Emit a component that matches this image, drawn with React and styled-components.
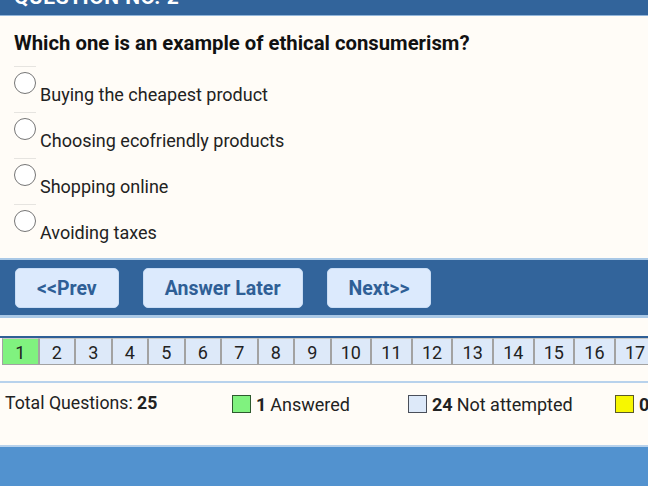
import React from "react";
import styled, { createGlobalStyle } from "styled-components";

const GlobalStyle = createGlobalStyle`
  html, body {
    margin: 0;
    padding: 0;
    background: #fffcf7;
    font-family: Roboto, "Liberation Sans", Arial, sans-serif;
    overflow: hidden;
  }
`;

const Page = styled.div`
  width: 648px;
  height: 486px;
  display: flex;
  flex-direction: column;
  overflow: hidden;
`;

const Header = styled.header`
  height: 15px;
  background: #32649b;
  border-bottom: 1px solid #93b6da;
  overflow: hidden;
`;

const HeaderTitle = styled.h1`
  margin: -14px 0 0 14px;
  font-size: 21px;
  line-height: 22px;
  font-weight: 700;
  color: #ffffff;
  letter-spacing: 0.5px;
`;

const QuestionArea = styled.section`
  padding: 15px 14px 0 14px;
  height: 242px;
  box-sizing: border-box;
`;

const QuestionText = styled.h2`
  margin: 0 0 11px 0;
  font-size: 20.3px;
  line-height: 24px;
  font-weight: 700;
  color: #111;
`;

const Option = styled.div`
  display: flex;
  flex-direction: column;
  padding-bottom: 7px;
`;

const Divider = styled.span`
  display: block;
  width: 22px;
  height: 1px;
  background: #e6e4e0;
`;

const OptionRow = styled.label`
  display: flex;
  align-items: flex-start;
  margin-top: 5px;
  cursor: pointer;
`;

const Radio = styled.span`
  width: 22px;
  height: 22px;
  box-sizing: border-box;
  border-radius: 50%;
  border: 1.5px solid #767676;
  background: #ffffff;
  flex-shrink: 0;
`;

const OptionLabel = styled.span`
  margin: 12px 0 0 4px;
  font-size: 18px;
  line-height: 21px;
  color: #222;
`;

const NavBar = styled.nav`
  background: #32649b;
  border-top: 2px solid #a9c8e6;
  border-bottom: 3px solid #a9c8e6;
  padding: 8px 15px 7px 15px;
  display: flex;
  gap: 24px;
`;

const NavButton = styled.button`
  height: 40px;
  padding: 0 21px;
  border: 1px solid #c9ddf5;
  border-radius: 5px;
  background: #dceafd;
  color: #2f5f96;
  font-family: Roboto, "Liberation Sans", Arial, sans-serif;
  font-size: 19.5px;
  font-weight: 700;
  cursor: pointer;
`;

const GridWrap = styled.div`
  margin-top: 18px;
  border-top: 2px solid #2f5f96;
  padding-left: 2px;
  display: flex;
  overflow: hidden;
  white-space: nowrap;
`;

const Cell = styled.div`
  flex-shrink: 0;
  min-width: 36.5px;
  height: 27px;
  line-height: 27px;
  padding: 0 9.2px;
  border: 1px solid #a2a2a2;
  border-top-color: #c8c8c8;
  box-sizing: border-box;
  background: ${(p) => (p.$answered ? "#80f27f" : "#dde9f9")};
  font-size: 18px;
  color: #222;
  text-align: center;
`;

const LegendBar = styled.div`
  margin-top: 16px;
  border-top: 2px solid #b8d2ec;
  border-bottom: 2px solid #b8d2ec;
  height: 62px;
  padding-left: 5px;
  display: grid;
  grid-template-columns: 227px 176px 207px auto;
  align-items: start;
  overflow: hidden;
  white-space: nowrap;
`;

const LegendItem = styled.div`
  display: flex;
  align-items: center;
  margin-top: ${(p) => (p.$plain ? 9 : 11)}px;
  font-size: ${(p) => (p.$plain ? 17.7 : 18)}px;
  line-height: 22px;
  color: #222;

  b {
    font-weight: 700;
    margin-right: 4px;
  }
`;

const Swatch = styled.span`
  width: 19px;
  height: 18px;
  box-sizing: border-box;
  border: 1.5px solid ${(p) => p.$edge};
  background: ${(p) => p.$fill};
  margin-right: 5px;
  margin-top: -3px;
  flex-shrink: 0;
`;

const Footer = styled.footer`
  flex: 1;
  background: #5292cf;
`;

const options = [
  "Buying the cheapest product",
  "Choosing ecofriendly products",
  "Shopping online",
  "Avoiding taxes",
];

export default function App() {
  const numbers = Array.from({ length: 25 }, (_, i) => i + 1);
  return (
    <Page>
      <GlobalStyle />
      <Header>
        <HeaderTitle>QUESTION NO. 2</HeaderTitle>
      </Header>
      <QuestionArea>
        <QuestionText>Which one is an example of ethical consumerism?</QuestionText>
        {options.map((o) => (
          <Option key={o}>
            <Divider />
            <OptionRow>
              <Radio />
              <OptionLabel>{o}</OptionLabel>
            </OptionRow>
          </Option>
        ))}
      </QuestionArea>
      <NavBar>
        <NavButton>&lt;&lt;Prev</NavButton>
        <NavButton>Answer Later</NavButton>
        <NavButton>Next&gt;&gt;</NavButton>
      </NavBar>
      <GridWrap>
        {numbers.map((n) => (
          <Cell key={n} $answered={n === 1}>
            {n}
          </Cell>
        ))}
      </GridWrap>
      <LegendBar>
        <LegendItem $plain>
          Total Questions:&nbsp;<b>25</b>
        </LegendItem>
        <LegendItem>
          <Swatch $fill="#80f27f" $edge="#2e5a2e" />
          <b>1</b>Answered
        </LegendItem>
        <LegendItem>
          <Swatch $fill="#dde9f9" $edge="#4a4f5a" />
          <b>24</b>Not attempted
        </LegendItem>
        <LegendItem>
          <Swatch $fill="#f7f700" $edge="#5a5a2a" />
          <b>0</b>Answer later
        </LegendItem>
      </LegendBar>
      <Footer />
    </Page>
  );
}
